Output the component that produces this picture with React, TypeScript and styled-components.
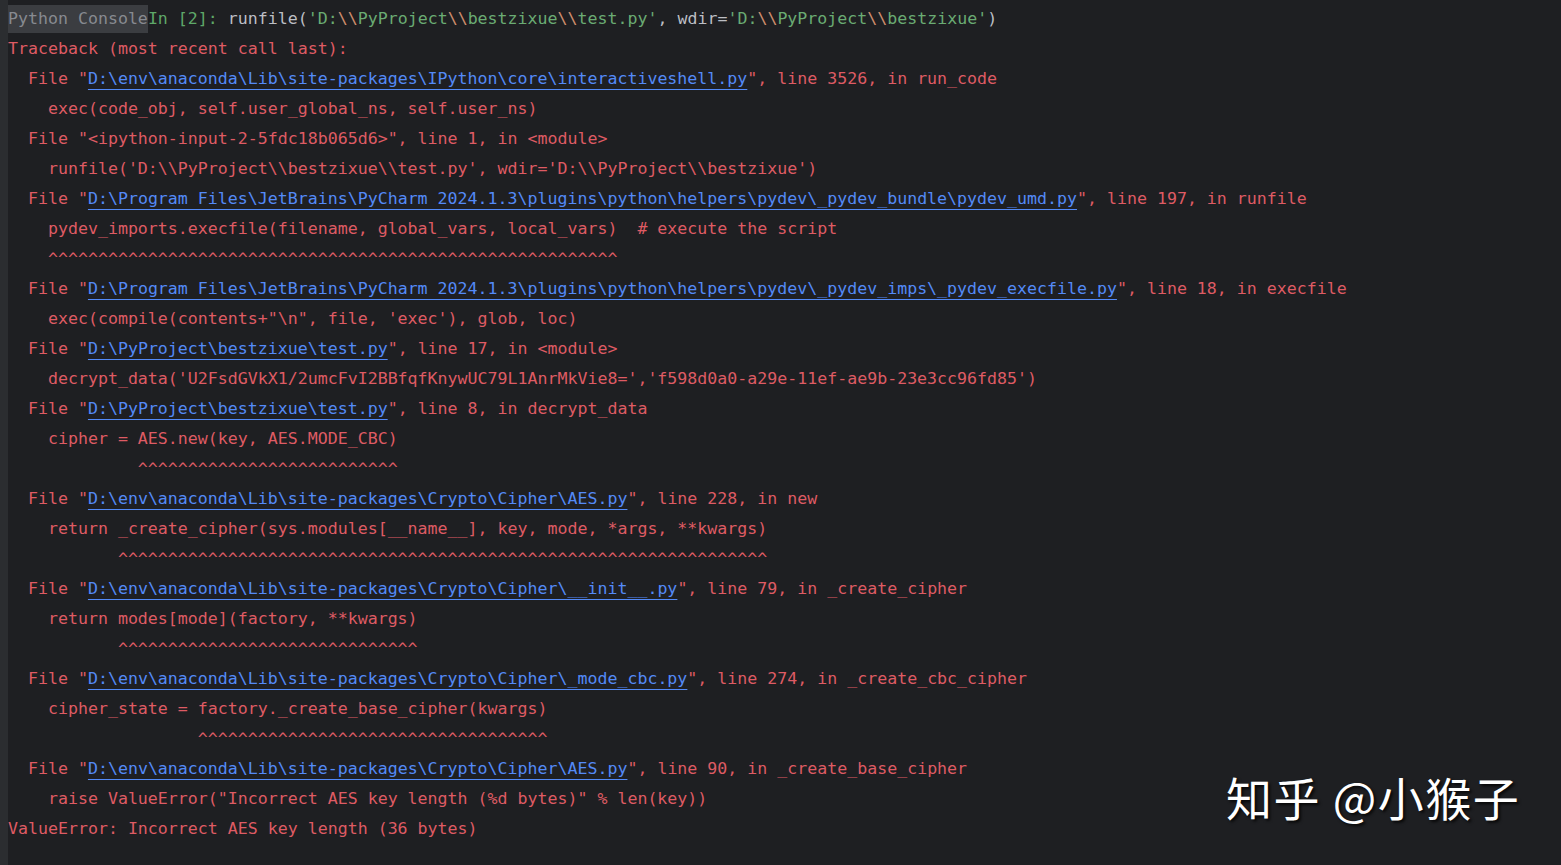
import React from "react";
import styled, { createGlobalStyle } from "styled-components";

const Global = createGlobalStyle`
  html, body { margin: 0; padding: 0; background: #1e1f22; }
  body { width: 1561px; height: 865px; overflow: hidden; }
`;

const Frame = styled.div`
  position: relative;
  display: flex;
  width: 1561px;
  height: 865px;
  background: #1e1f22;
`;

const Gutter = styled.div`
  width: 8px;
  flex: none;
  background: #2b2d30;
`;

const Console = styled.div`
  flex: 1;
  padding-top: 4px;
  font-family: "DejaVu Sans Mono", "Liberation Mono", monospace;
  font-size: 16.6px;
  line-height: 30px;
  color: #de5b64;
  white-space: pre;
`;

const Line = styled.div`
  height: 30px;
`;

const Label = styled.span`
  display: inline-block;
  background: #3b3d41;
  color: #878a90;
  line-height: 28px;
`;

const Prompt = styled.span`
  color: #5ea869;
`;
const Code = styled.span`
  color: #bcbec4;
`;
const Str = styled.span`
  color: #6aab73;
`;
const Esc = styled.span`
  color: #cf8e6d;
`;

const Link = styled.span`
  color: #548af7;
  text-decoration: underline;
  text-underline-offset: 5px;
  text-decoration-thickness: 1px;
  text-decoration-skip-ink: none;
`;

const Watermark = styled.div`
  position: absolute;
  left: 1226px;
  top: 766px;
  font-family: "Noto Sans CJK SC", "Noto Sans", sans-serif;
  font-size: 46px;
  font-weight: 400;
  line-height: 60px;
  color: #ffffff;
  letter-spacing: 1.5px;
  text-shadow: 2px 2px 3px rgba(0, 0, 0, 0.8);
  white-space: pre;
`;

const PathStr = ({ parts }: { parts: string[] }) => (
  <>
    {parts.map((p, i) => (
      <React.Fragment key={i}>
        {i > 0 && <Esc>{"\\\\"}</Esc>}
        <Str>{p}</Str>
      </React.Fragment>
    ))}
  </>
);

const FileLine = ({ path, rest }: { path: string; rest: string }) => (
  <Line>
    {'  File "'}
    <Link>{path}</Link>
    {'", ' + rest}
  </Line>
);

export default function App() {
  return (
    <>
      <Global />
      <Frame>
        <Gutter />
        <Console>
          <Line>
            <Label>Python Console</Label>
            <Prompt>In [2]: </Prompt>
            <Code>runfile(</Code>
            <PathStr parts={["'D:", "PyProject", "bestzixue", "test.py'"]} />
            <Code>, wdir=</Code>
            <PathStr parts={["'D:", "PyProject", "bestzixue'"]} />
            <Code>)</Code>
          </Line>
          <Line>Traceback (most recent call last):</Line>
          <FileLine
            path="D:\env\anaconda\Lib\site-packages\IPython\core\interactiveshell.py"
            rest="line 3526, in run_code"
          />
          <Line>{"    exec(code_obj, self.user_global_ns, self.user_ns)"}</Line>
          <Line>{'  File "<ipython-input-2-5fdc18b065d6>", line 1, in <module>'}</Line>
          <Line>{"    runfile('D:\\\\PyProject\\\\bestzixue\\\\test.py', wdir='D:\\\\PyProject\\\\bestzixue')"}</Line>
          <FileLine
            path="D:\Program Files\JetBrains\PyCharm 2024.1.3\plugins\python\helpers\pydev\_pydev_bundle\pydev_umd.py"
            rest="line 197, in runfile"
          />
          <Line>{"    pydev_imports.execfile(filename, global_vars, local_vars)  # execute the script"}</Line>
          <Line>{"    " + "^".repeat(57)}</Line>
          <FileLine
            path="D:\Program Files\JetBrains\PyCharm 2024.1.3\plugins\python\helpers\pydev\_pydev_imps\_pydev_execfile.py"
            rest="line 18, in execfile"
          />
          <Line>{"    exec(compile(contents+\"\\n\", file, 'exec'), glob, loc)"}</Line>
          <FileLine path="D:\PyProject\bestzixue\test.py" rest="line 17, in <module>" />
          <Line>{"    decrypt_data('U2FsdGVkX1/2umcFvI2BBfqfKnywUC79L1AnrMkVie8=','f598d0a0-a29e-11ef-ae9b-23e3cc96fd85')"}</Line>
          <FileLine path="D:\PyProject\bestzixue\test.py" rest="line 8, in decrypt_data" />
          <Line>{"    cipher = AES.new(key, AES.MODE_CBC)"}</Line>
          <Line>{" ".repeat(13) + "^".repeat(26)}</Line>
          <FileLine
            path="D:\env\anaconda\Lib\site-packages\Crypto\Cipher\AES.py"
            rest="line 228, in new"
          />
          <Line>{"    return _create_cipher(sys.modules[__name__], key, mode, *args, **kwargs)"}</Line>
          <Line>{" ".repeat(11) + "^".repeat(65)}</Line>
          <FileLine
            path="D:\env\anaconda\Lib\site-packages\Crypto\Cipher\__init__.py"
            rest="line 79, in _create_cipher"
          />
          <Line>{"    return modes[mode](factory, **kwargs)"}</Line>
          <Line>{" ".repeat(11) + "^".repeat(30)}</Line>
          <FileLine
            path="D:\env\anaconda\Lib\site-packages\Crypto\Cipher\_mode_cbc.py"
            rest="line 274, in _create_cbc_cipher"
          />
          <Line>{"    cipher_state = factory._create_base_cipher(kwargs)"}</Line>
          <Line>{" ".repeat(19) + "^".repeat(35)}</Line>
          <FileLine
            path="D:\env\anaconda\Lib\site-packages\Crypto\Cipher\AES.py"
            rest="line 90, in _create_base_cipher"
          />
          <Line>{'    raise ValueError("Incorrect AES key length (%d bytes)" % len(key))'}</Line>
          <Line>ValueError: Incorrect AES key length (36 bytes)</Line>
        </Console>
        <Watermark>知乎 @小猴子</Watermark>
      </Frame>
    </>
  );
}
